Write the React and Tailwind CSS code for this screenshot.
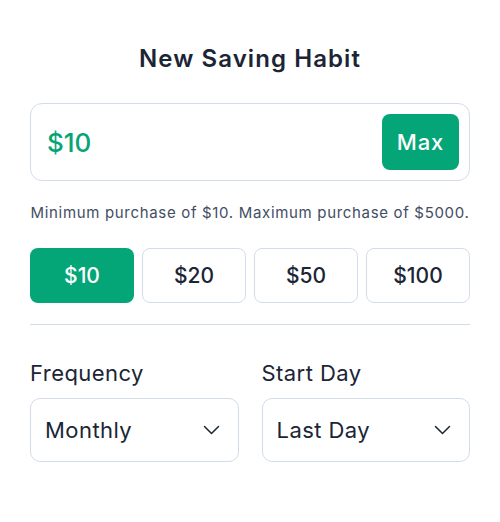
const amounts = ['$10', '$20', '$50', '$100'];

function Chevron() {
  return (
    <svg width="17" height="10" viewBox="0 0 17 10" fill="none" className="text-[#1b2536]">
      <path d="M1.5 1.5L8.5 8.5L15.5 1.5" stroke="currentColor" strokeWidth="1.5" strokeLinecap="round" strokeLinejoin="round" />
    </svg>
  );
}

function Select({ label, value }) {
  return (
    <div className="flex flex-col">
      <span className="text-[22px] leading-[26px] tracking-[0.02em] text-[#1b2536]">{label}</span>
      <div className="mt-[12px] h-[64px] rounded-[10px] border border-[#d3dde9] flex items-center justify-between pl-[14px] pr-[18px]">
        <span className="text-[22px] tracking-[0.02em] text-[#1b2536]">{value}</span>
        <Chevron />
      </div>
    </div>
  );
}

export default function App() {
  const selected = '$10';
  return (
    <div className="w-[500px] h-[522px] bg-white px-[30px] pt-[44px] font-['Inter',sans-serif]">
      <h1 className="text-center text-[24px] leading-[30px] tracking-[0.045em] font-semibold text-[#1b2536]">
        New Saving Habit
      </h1>

      {/* Amount input */}
      <div className="mt-[29px] h-[78px] rounded-[12px] border border-[#d3dde9] flex items-center justify-between pl-[16px] pr-[10px]">
        <span className="text-[26px] font-medium text-[#07a475]">$10</span>
        <button className="w-[77px] h-[56px] rounded-[8px] bg-[#04a577] text-white text-[22px] tracking-[0.04em] font-medium">
          Max
        </button>
      </div>

      <p className="mt-[22px] text-center text-[15px] leading-5 tracking-[0.045em] text-[#3f4e63]">
        Minimum purchase of $10. Maximum purchase of $5000.
      </p>

      {/* Preset amounts */}
      <div className="mt-[25px] grid grid-cols-4 gap-[8px]">
        {amounts.map((a) => (
          <button
            key={a}
            className={`h-[55px] rounded-[8px] text-[21px] font-medium ${
              a === selected
                ? 'bg-[#04a577] text-white'
                : 'border border-[#d3dde9] text-[#1b2536]'
            }`}
          >
            {a}
          </button>
        ))}
      </div>

      <div className="mt-[21px] h-px bg-[#d3dde9]" />

      <div className="mt-[35px] grid grid-cols-2 gap-[23px]">
        <Select label="Frequency" value="Monthly" />
        <Select label="Start Day" value="Last Day" />
      </div>
    </div>
  );
}
